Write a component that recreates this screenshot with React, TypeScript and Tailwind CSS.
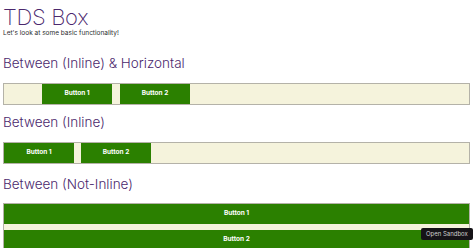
import React from 'react';

const Btn = ({ label, className = '' }: { label: string; className?: string }) => (
  <button className={`h-[20px] bg-[#2b8000] text-white text-[6.5px] font-bold flex items-center justify-center ${className}`}>
    {label}
  </button>
);

const Heading = ({ children }: { children: React.ReactNode }) => (
  <h2 className="text-[13.5px] font-light text-[#4b286d] leading-none">{children}</h2>
);

export default function App() {
  return (
    <div className="relative h-[248px] overflow-hidden bg-white px-[3px] font-['Inter',sans-serif]">
      <h1 className="pt-[6px] text-[22px] font-extralight leading-none text-[#4b286d] tracking-[-0.3px]">TDS Box</h1>
      <p className="mt-[2px] text-[6.5px] text-[#2a2c2e] leading-none">Let's look at some basic functionality!</p>

      <div className="mt-[20px]">
        <Heading>Between (Inline) &amp; Horizontal</Heading>
      </div>
      <div className="mt-[13px] mr-[1px] flex gap-[8px] border border-[#b4b2a8] bg-[#f5f3dc] pl-[38px]">
        <Btn label="Button 1" className="w-[70px]" />
        <Btn label="Button 2" className="w-[70px]" />
      </div>

      <div className="mt-[11px]">
        <Heading>Between (Inline)</Heading>
      </div>
      <div className="mt-[12px] mr-[1px] flex gap-[7px] border border-[#b4b2a8] bg-[#f5f3dc]">
        <Btn label="Button 1" className="w-[70px]" />
        <Btn label="Button 2" className="w-[70px]" />
      </div>

      <div className="mt-[14px]">
        <Heading>Between (Not-Inline)</Heading>
      </div>
      <div className="mt-[12px] mr-[1px] flex flex-col gap-[6px] border border-[#b4b2a8] bg-[#f5f3dc]">
        <Btn label="Button 1" className="w-full" />
        <Btn label="Button 2" className="w-full" />
      </div>

      <div className="absolute left-[421px] top-[228px] rounded-[2px] bg-[#151317] px-[5px] py-[3px] text-[6px] leading-none text-[#cfcfcf]">
        Open Sandbox
      </div>
    </div>
  );
}
